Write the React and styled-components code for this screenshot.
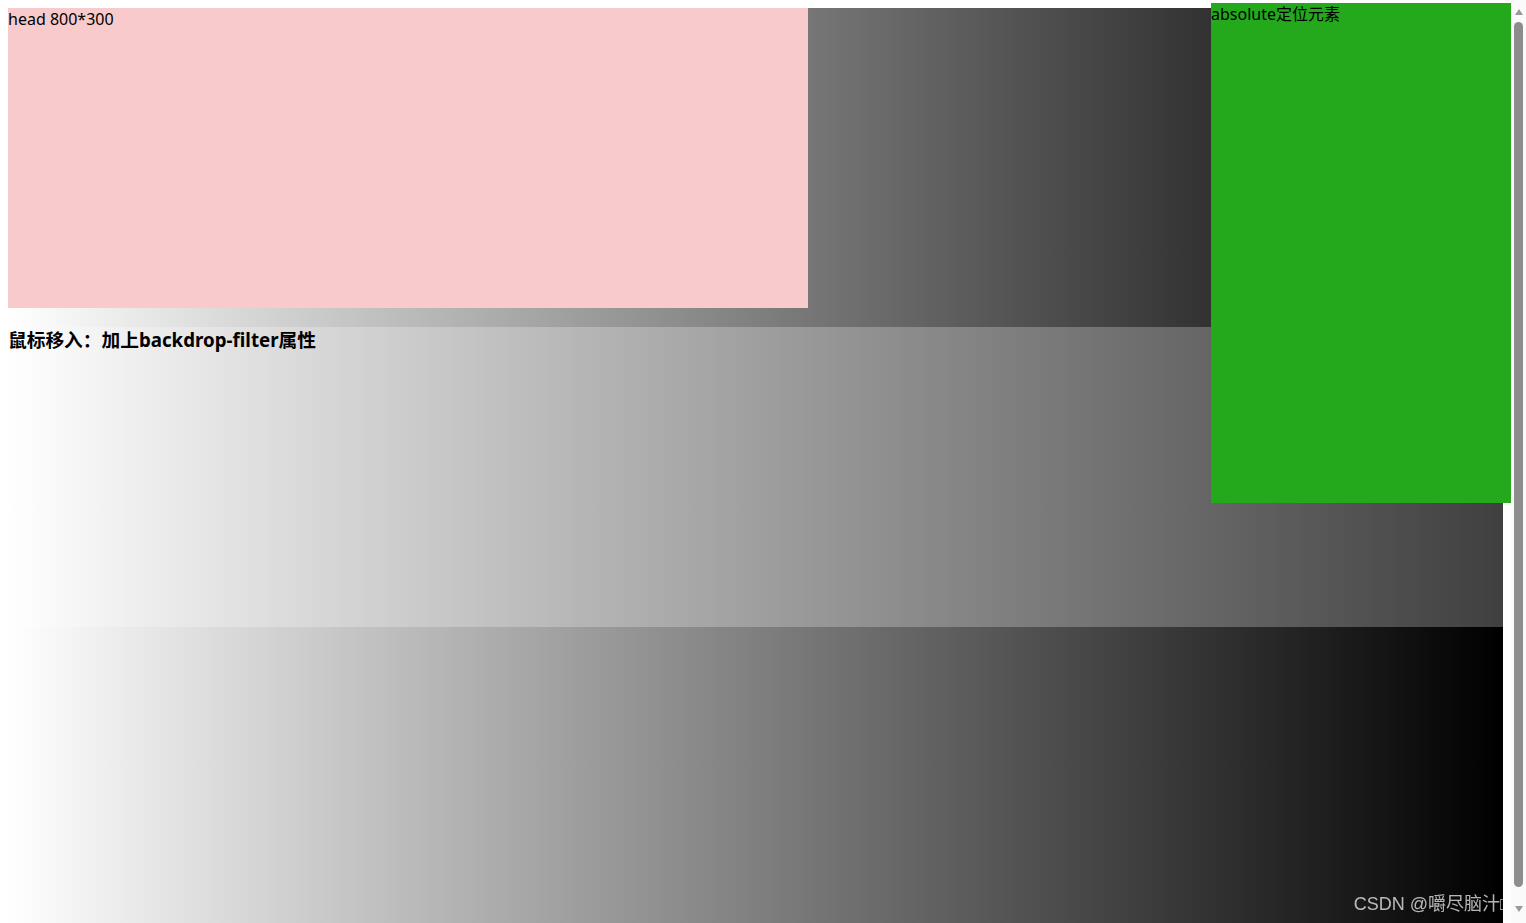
import React from "react";
import styled, { createGlobalStyle } from "styled-components";

const GlobalStyle = createGlobalStyle`
  html {
    background: #fff;
    overflow: hidden;
  }
  body {
    margin: 8px 23px 8px 8px; /* 右边多留滚动条的 15px */
    background: linear-gradient(to right, #fff, #000);
    font-family: "Noto Sans", "Noto Sans CJK SC", sans-serif;
    font-size: 16px;
    color: #000;
  }
`;

const Head = styled.div`
  width: 800px;
  height: 300px;
  background-color: #f8cacb;
  line-height: 22px;
`;

const Mask = styled.div`
  height: 300px;
  background-color: rgba(255, 255, 255, 0.25);
`;

const Title = styled.h3`
  margin: 18.72px 0;
  font-size: 18.72px;
  font-weight: bold;
  line-height: 26px;
`;

const Rest = styled.div`
  height: 600px;
`;

const Floating = styled.div`
  position: absolute;
  top: 3px;
  right: 15px;
  width: 300px;
  height: 500px;
  background-color: #23a91b;
  line-height: 22px;
`;

// 截图里的浏览器滚动条
const ScrollBar = styled.div`
  position: fixed;
  top: 0;
  right: 0;
  width: 15px;
  height: 100vh;
  background: #fafafa;
  display: flex;
  flex-direction: column;
  align-items: center;
`;

const Arrow = styled.div`
  width: 0;
  height: 0;
  border-left: 4px solid transparent;
  border-right: 4px solid transparent;
  ${(p) =>
    p.down
      ? "border-top: 6px solid #9a9a9a; margin-top: 19px;"
      : "border-bottom: 6px solid #9a9a9a; margin: 9px 0 7px;"}
`;

const Thumb = styled.div`
  width: 9px;
  height: 865px;
  border-radius: 5px;
  background: #8d8d8d;
`;

const Watermark = styled.div`
  position: fixed;
  right: 15px;
  bottom: 8px;
  font-family: "Liberation Sans", "Noto Sans CJK SC", sans-serif;
  font-size: 18px;
  color: rgba(255, 255, 255, 0.7);
`;

const App = () => {
  return (
    <>
      <GlobalStyle />
      <Head>head 800*300</Head>
      <Mask>
        <Title>鼠标移入：加上backdrop-filter属性</Title>
      </Mask>
      <Rest />
      <Floating>absolute定位元素</Floating>
      <Watermark>CSDN @嚼尽脑汁□</Watermark>
      <ScrollBar>
        <Arrow />
        <Thumb />
        <Arrow down />
      </ScrollBar>
    </>
  );
};

export default App;
